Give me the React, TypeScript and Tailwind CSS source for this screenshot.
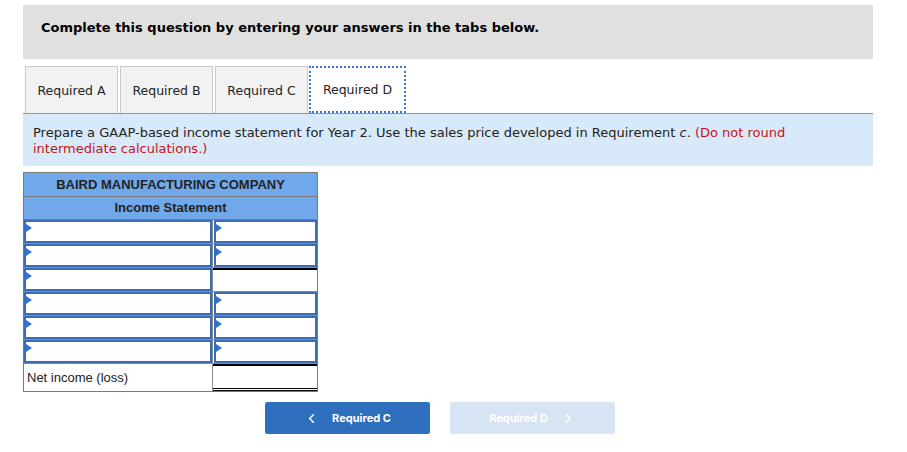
import { ChevronLeft, ChevronRight } from 'lucide-react';

const verdana = { fontFamily: '"DejaVu Sans", Verdana, sans-serif' };
const arial = { fontFamily: '"Liberation Sans", Arial, sans-serif' };

function Marker() {
  return (
    <span className="absolute left-0 top-[2px] h-0 w-0 border-y-[4px] border-l-[6px] border-y-transparent border-l-[#2f74d0]" />
  );
}

function InputCell() {
  return (
    <div className="relative h-full border-2 border-[#3a6db5] bg-white">
      <Marker />
    </div>
  );
}

type Row = { right: 'input' | 'total' };

const rows: Row[] = [
  { right: 'input' },
  { right: 'input' },
  { right: 'total' },
  { right: 'input' },
  { right: 'input' },
  { right: 'input' },
];

export default function App() {
  return (
    <div className="min-h-[452px] w-[907px] bg-white pt-[5px] pl-[23px]">
      <div className="w-[850px]">
        <div className="h-[54px] bg-[#e0e0e0] pl-[18px] pt-[15px]">
          <p className="text-[13px] font-bold leading-[16px] text-black" style={verdana}>
            Complete this question by entering your answers in the tabs below.
          </p>
        </div>

        <div className="mt-[7px] flex h-[47px] items-stretch pl-[2px]" style={verdana}>
          {['Required A', 'Required B', 'Required C'].map((t) => (
            <div
              key={t}
              className="mr-[2px] flex w-[93px] items-center justify-center border border-b-0 border-[#c9c9c9] bg-[#f2f2f2] pt-[2px] text-[12.5px] text-[#222]"
            >
              {t}
            </div>
          ))}
          <div className="-ml-[1px] flex w-[97px] items-center justify-center border-2 border-dotted border-[#3a78d0] bg-white pt-[2px] text-[12.5px] text-[#222]">
            Required D
          </div>
        </div>

        <div className="h-[53px] border-t border-[#8d9aa6] bg-[#d8eaf9] px-[10px] pt-[11px]" style={verdana}>
          <p className="text-[13px] leading-[16px] text-[#222]">
            Prepare a GAAP-based income statement for Year 2. Use the sales price developed in Requirement <i>c</i>.{' '}
            <span className="text-[#c4131b]">(Do not round</span>
            <br />
            <span className="text-[#c4131b]">intermediate calculations.)</span>
          </p>
        </div>

        <div className="mt-[6px] w-[295px] border border-[#7a7a7a]" style={arial}>
          <div className="flex h-[24px] items-center justify-center border-b border-[#7a7a7a] bg-[#70a8e9] text-[13px] font-bold text-[#222]">
            BAIRD MANUFACTURING COMPANY
          </div>
          <div className="flex h-[23px] items-center justify-center border-b border-[#7a7a7a] bg-[#70a8e9] text-[13px] font-bold text-[#222]">
            Income Statement
          </div>
          {rows.map((r, i) => (
            <div key={i} className="flex h-[24px] border-b border-[#8a8a8a]">
              <div className="w-[189px] border-r border-[#8a8a8a]">
                <InputCell />
              </div>
              <div className="flex-1">
                {r.right === 'input' ? (
                  <div className="h-full pl-[1px]">
                    <InputCell />
                  </div>
                ) : (
                  <div className="h-full border-t-2 border-black bg-white" />
                )}
              </div>
            </div>
          ))}
          <div className="flex h-[27px]">
            <div className="flex w-[189px] items-center border-r border-[#8a8a8a] pl-[3px] pt-[1px] text-[13px] text-[#222]">
              Net income (loss)
            </div>
            <div className="flex-1 border-t-2 border-b-[3px] border-double border-black" />
          </div>
        </div>

        <div className="mt-[10px] flex gap-[20px] pl-[242px]" style={{ fontFamily: 'Inter, Roboto, sans-serif' }}>
          <div className="flex h-[32px] w-[165px] items-center justify-center gap-[13px] rounded-[2px] bg-[#2e6fbe] text-[11px] font-bold text-white">
            <ChevronLeft size={15} strokeWidth={2.5} />
            <span>Required C</span>
          </div>
          <div className="flex h-[32px] w-[165px] items-center justify-center gap-[13px] rounded-[2px] bg-[#d6e4f4] text-[11px] font-bold text-white">
            <span>Required D</span>
            <ChevronRight size={15} strokeWidth={2.5} />
          </div>
        </div>
      </div>
    </div>
  );
}
